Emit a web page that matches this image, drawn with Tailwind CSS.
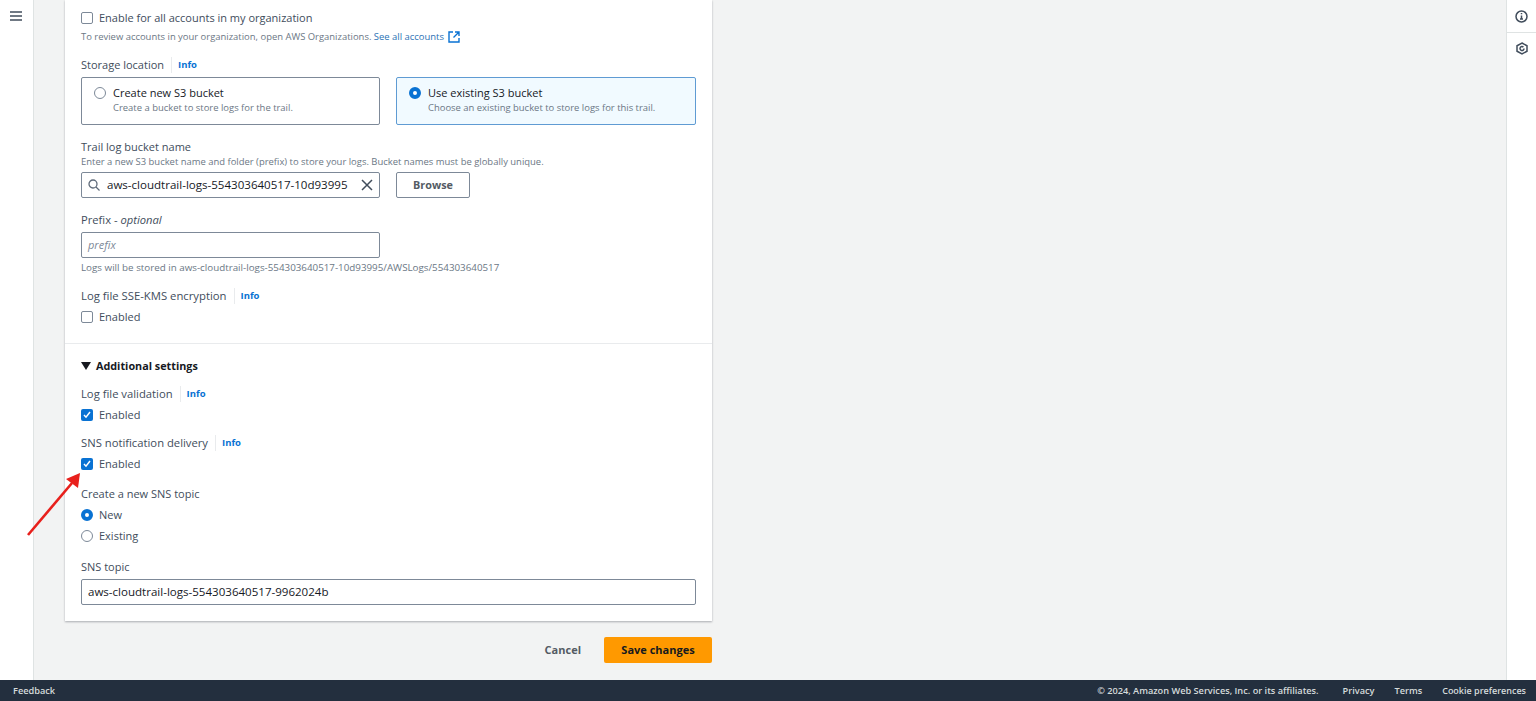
<!DOCTYPE html>
<html lang="en">
<head>
  <meta charset="UTF-8" />
  <meta name="viewport" content="width=device-width, initial-scale=1" />
  <title>Edit trail</title>
  <script src="https://cdn.jsdelivr.net/npm/@tailwindcss/browser@4"></script>
</head>
<body class="h-[701px] overflow-hidden flex flex-col bg-[#f2f3f3] font-['Open_Sans',sans-serif] text-[#414d5c]">
  <div class="relative flex-1 flex min-h-0">
    <!-- left nav -->
    <aside class="w-[34px] shrink-0 bg-white border-r border-[#dfe3e3] pl-[10px] pt-[11px]">
      <svg width="12" height="10" viewBox="0 0 12 10" fill="none" stroke="#414d5c" stroke-width="1.6"><path d="M0 1h12M0 5h12M0 9h12"/></svg>
    </aside>

    <main class="flex-1 pl-[31px]">
      <div class="w-[647px] h-[621px] bg-white shadow-[0_1px_2px_rgba(0,7,22,0.3)]">
        <div class="px-4 border-b border-[#e9ebed] h-[344px]">
          <div class="h-[12px]"></div>
          <div class="flex items-center gap-[6px] h-[12px] text-[11px]">
            <span class="w-[12px] h-[12px] rounded-[2px] border border-[#7d8998] bg-white"></span>
            <span>Enable for all accounts in my organization</span>
          </div>
          <div class="mt-[7px] h-[12px] flex items-center text-[9.45px] text-[#6b7785]">
            <span>To review accounts in your organization, open AWS Organizations.&nbsp;</span>
            <span class="text-[#2b72b5]">See all accounts</span>
            <svg class="ml-[4px]" width="12" height="12" viewBox="0 0 12 12" fill="none" stroke="#0972d3" stroke-width="1.4"><path d="M5 1H1v10h10V7M7 1h4v4M11 1L5.500 6.500"/></svg>
          </div>
          <div class="mt-[14px] h-[16px] flex items-center text-[11px]">
            <span class="pr-[7px] border-r border-[#e9ebed]">Storage location</span>
            <a class="pl-[6px] text-[9.5px] font-bold text-[#0972d3]">Info</a>
          </div>
          <div class="mt-[4px] flex gap-4">
            <div class="w-[299px] h-[48px] border border-[#7d8998] rounded-[2px] pl-[12px] pt-[8px] flex gap-[7px]">
              <span class="mt-[1px] w-[12px] h-[12px] rounded-full border border-[#7d8998]"></span>
              <div>
                <div class="text-[11px] leading-[14px] text-[#16191f]">Create new S3 bucket</div>
                <div class="text-[9.45px] leading-[16px] text-[#6b7785]">Create a bucket to store logs for the trail.</div>
              </div>
            </div>
            <div class="w-[300px] h-[48px] border border-[#5f9bd3] bg-[#f1faff] rounded-[2px] pl-[12px] pt-[8px] flex gap-[7px]">
              <span class="mt-[1px] w-[12px] h-[12px] rounded-full border-[4px] border-[#0972d3] bg-white"></span>
              <div>
                <div class="text-[11px] leading-[14px] text-[#16191f]">Use existing S3 bucket</div>
                <div class="text-[9.45px] leading-[16px] text-[#6b7785]">Choose an existing bucket to store logs for this trail.</div>
              </div>
            </div>
          </div>
          <div class="mt-[15px] h-[14px] flex items-center text-[11px]">Trail log bucket name</div>
          <div class="mt-[1px] h-[14px] flex items-center text-[9.45px] text-[#6b7785]">Enter a new S3 bucket name and folder (prefix) to store your logs. Bucket names must be globally unique.</div>
          <div class="mt-[3px] flex gap-4">
            <div class="w-[299px] h-[26px] border border-[#7d8998] rounded-[2px] pl-[6px] pr-[6px] flex items-center gap-[7px]">
              <svg class="shrink-0" width="12" height="12" viewBox="0 0 12 12" fill="none" stroke="#5f6b7a" stroke-width="1.3"><circle cx="5" cy="5" r="4"/><path d="M8 8l3.500 3.500"/></svg>
              <span class="flex-1 text-[11.55px] text-[#16191f] whitespace-nowrap">aws-cloudtrail-logs-554303640517-10d93995</span>
              <svg class="shrink-0" width="12" height="12" viewBox="0 0 12 12" fill="none" stroke="#414d5c" stroke-width="1.5"><path d="M1 1l10 10M11 1L1 11"/></svg>
            </div>
            <div class="w-[74px] h-[26px] border border-[#7d8998] rounded-[2px] flex items-center justify-center text-[10.8px] font-bold text-[#545b64]">Browse</div>
          </div>
          <div class="mt-[15px] h-[14px] flex items-center text-[11.2px]"><span>Prefix -&nbsp;</span><i>optional</i></div>
          <div class="mt-[5px] w-[299px] h-[26px] border border-[#7d8998] rounded-[2px] pl-[6px] flex items-center text-[11px] italic text-[#7d8998]">prefix</div>
          <div class="mt-[3px] h-[14px] flex items-center text-[9.8px] text-[#6b7785] whitespace-nowrap">Logs will be stored in aws-cloudtrail-logs-554303640517-10d93995/AWSLogs/554303640517</div>
          <div class="mt-[13px] h-[16px] flex items-center text-[11.3px]">
            <span class="pr-[7px] border-r border-[#e9ebed]">Log file SSE-KMS encryption</span>
            <a class="pl-[6px] text-[9.5px] font-bold text-[#0972d3]">Info</a>
          </div>
          <div class="mt-[7px] flex items-center gap-[6px] h-[12px] text-[11px]">
            <span class="w-[12px] h-[12px] rounded-[2px] border border-[#7d8998] bg-white"></span>
            <span>Enabled</span>
          </div>
        </div>

        <div class="px-4">
          <div class="mt-[15px] h-[14px] flex items-center gap-[5px] text-[10.8px] font-bold text-[#16191f]">
            <svg width="10" height="8" viewBox="0 0 10 8" fill="#16191f"><path d="M0 0h10L5 8z"/></svg>
            <span>Additional settings</span>
          </div>
          <div class="mt-[13px] h-[16px] flex items-center text-[11.25px]">
            <span class="pr-[7px] border-r border-[#e9ebed]">Log file validation</span>
            <a class="pl-[6px] text-[9.5px] font-bold text-[#0972d3]">Info</a>
          </div>
          <div class="mt-[7px] flex items-center gap-[6px] h-[12px] text-[11px]">
            <span class="w-[12px] h-[12px] rounded-[2px] bg-[#0972d3] flex items-center justify-center">
              <svg width="8" height="8" viewBox="0 0 8 8" fill="none" stroke="#fff" stroke-width="1.5"><path d="M1 4l2 2.200L7 1"/></svg>
            </span>
            <span>Enabled</span>
          </div>
          <div class="mt-[14px] h-[16px] flex items-center text-[11.25px]">
            <span class="pr-[7px] border-r border-[#e9ebed]">SNS notification delivery</span>
            <a class="pl-[6px] text-[9.5px] font-bold text-[#0972d3]">Info</a>
          </div>
          <div class="mt-[7px] flex items-center gap-[6px] h-[12px] text-[11px]">
            <span class="w-[12px] h-[12px] rounded-[2px] bg-[#0972d3] flex items-center justify-center">
              <svg width="8" height="8" viewBox="0 0 8 8" fill="none" stroke="#fff" stroke-width="1.5"><path d="M1 4l2 2.200L7 1"/></svg>
            </span>
            <span>Enabled</span>
          </div>
          <div class="mt-[17px] h-[14px] flex items-center text-[11px]">Create a new SNS topic</div>
          <div class="mt-[8px] flex items-center gap-[6px] h-[12px] text-[11px]">
            <span class="w-[12px] h-[12px] rounded-full border-[4px] border-[#0972d3] bg-white"></span>
            <span>New</span>
          </div>
          <div class="mt-[9px] flex items-center gap-[6px] h-[12px] text-[11px]">
            <span class="w-[12px] h-[12px] rounded-full border border-[#7d8998]"></span>
            <span>Existing</span>
          </div>
          <div class="mt-[18px] h-[14px] flex items-center text-[11px]">SNS topic</div>
          <div class="mt-[5px] w-[615px] h-[26px] border border-[#7d8998] rounded-[2px] pl-[6px] flex items-center text-[11.55px] text-[#16191f]">aws-cloudtrail-logs-554303640517-9962024b</div>
        </div>
      </div>

      <div class="w-[647px] mt-[16px] flex justify-end items-center">
        <span class="text-[11px] font-bold text-[#545b64] mr-[23px]">Cancel</span>
        <div class="w-[108px] h-[26px] bg-[#ff9900] rounded-[2px] flex items-center justify-center text-[11px] font-bold text-[#16191f]">Save changes</div>
      </div>
    </main>

    <!-- right rail -->
    <aside class="w-[30px] shrink-0 bg-white border-l border-[#dfe3e3]">
      <div class="h-[33px] border-b border-[#dfe3e3] flex items-center justify-center">
        <svg width="13" height="13" viewBox="0 0 13 13" fill="none" stroke="#414d5c" stroke-width="1.5"><circle cx="6.500" cy="6.500" r="5.500"/><path d="M6.500 5.500v3.500M5 9h3M6.500 3v1.300"/></svg>
      </div>
      <div class="h-[30px] flex items-center justify-center">
        <svg width="12" height="13" viewBox="0 0 12 13" fill="none" stroke="#414d5c" stroke-width="1.5"><path d="M6 1l5 2.800v5.400L6 12 1 9.200V3.800z"/><path d="M8 6.500a2 2 0 1 1-.6-1.400"/></svg>
      </div>
    </aside>

    <!-- annotation arrow -->
    <svg class="absolute left-[26px] top-[470px]" width="56" height="68" viewBox="0 0 56 68" fill="none">
      <path d="M2 65L46 13" stroke="#e8201c" stroke-width="2.600"/>
      <path d="M54 3L40 9L52 18z" fill="#e8201c"/>
    </svg>
  </div>

  <footer class="h-[21px] shrink-0 bg-[#232f3e] flex items-center pl-[13px] pr-[10px] text-[9.2px] font-semibold text-[#d5dbdb]">
    <span>Feedback</span>
    <span class="ml-auto">© 2024, Amazon Web Services, Inc. or its affiliates.</span>
    <span class="ml-[24px]">Privacy</span>
    <span class="ml-[20px]">Terms</span>
    <span class="ml-[20px] text-[9px]">Cookie preferences</span>
  </footer>
</body>
</html>
